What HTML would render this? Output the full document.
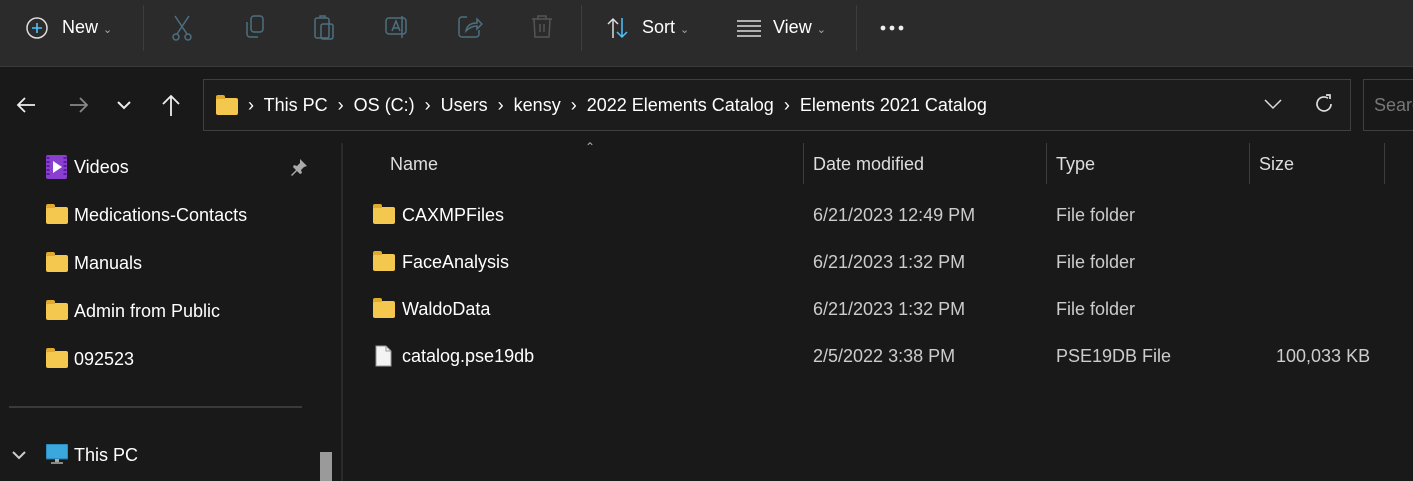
<!DOCTYPE html>
<html><head><meta charset="utf-8"><style>
*{margin:0;padding:0;box-sizing:border-box}
body{width:1413px;height:481px;background:#191919;font-family:"Liberation Sans",sans-serif;color:#fff;font-size:18px;position:relative;overflow:hidden}
.tb{position:absolute;left:0;top:0;width:1413px;height:67px;background:#2b2b2b;border-bottom:1px solid #3a3a3a}
.a{position:absolute;white-space:nowrap}
.vs{position:absolute;width:1px;background:#3d3d3d}
.fold{position:absolute;width:22px;height:17px;background:#f4c84e;border-radius:2px}
.fold:before{content:"";position:absolute;left:0;top:-3px;width:9px;height:4px;background:#e0aa2c;border-radius:2px 2px 0 0}
.gray{color:#ccc}
</style></head><body>
<div class="tb"></div>
<svg class="a" style="left:25px;top:16px" width="24" height="24" viewBox="0 0 24 24"><circle cx="12" cy="12" r="10" fill="none" stroke="#ddd" stroke-width="1.5"/><path d="M12 7v10M7 12h10" stroke="#4cc2ff" stroke-width="1.6"/></svg>
<div class="a" style="left:62px;top:17px">New <span style="font-size:11px;color:#aaa">&#8964;</span></div>
<div class="vs" style="left:143px;top:5px;height:46px"></div>
<svg class="a" style="left:169px;top:14px" width="26" height="28" viewBox="0 0 26 28" fill="none" stroke="#4d6f80" stroke-width="1.5"><path d="M6 2l12 18M20 2L8 20"/><circle cx="7" cy="23" r="3"/><circle cx="19" cy="23" r="3"/></svg>
<svg class="a" style="left:243px;top:14px" width="24" height="26" viewBox="0 0 24 26" fill="none" stroke="#4d6f80" stroke-width="1.5"><rect x="8" y="2" width="12" height="16" rx="3"/><path d="M4 8v12a3 3 0 0 0 3 3h8"/></svg>
<svg class="a" style="left:313px;top:13px" width="24" height="28" viewBox="0 0 24 28" fill="none" stroke="#4d6f80" stroke-width="1.5"><rect x="2" y="5" width="14" height="20" rx="2"/><rect x="8" y="11" width="12" height="15" rx="2"/><path d="M7 5V3h5v2"/></svg>
<svg class="a" style="left:384px;top:14px" width="28" height="26" viewBox="0 0 28 26" fill="none" stroke="#4d6f80" stroke-width="1.5"><rect x="2" y="4" width="20" height="16" rx="3"/><path d="M8 17l4-10 4 10M9 14h6M18 2v22"/></svg>
<svg class="a" style="left:457px;top:14px" width="26" height="26" viewBox="0 0 26 26" fill="none" stroke="#4d6f80" stroke-width="1.5"><path d="M10 3H5a3 3 0 0 0-3 3v14a3 3 0 0 0 3 3h14a3 3 0 0 0 3-3v-4"/><path d="M9 17c1-6 5-8 11-8V5l5 5-5 5v-3c-5 0-8 2-11 5z"/></svg>
<svg class="a" style="left:530px;top:14px" width="24" height="26" viewBox="0 0 24 26" fill="none" stroke="#555" stroke-width="1.5"><path d="M2 5h20M8 5V2h8v3M4 5l1 18h14l1-18M10 10v8M14 10v8"/></svg>
<div class="vs" style="left:581px;top:5px;height:46px"></div>
<svg class="a" style="left:606px;top:16px" width="24" height="24" viewBox="0 0 24 24" fill="none" stroke-width="1.5"><path d="M7 22V3M2 8l5-5 5 5" stroke="#ddd"/><path d="M16 2v19M11 16l5 5 5-5" stroke="#4cc2ff"/></svg>
<div class="a" style="left:642px;top:17px">Sort <span style="font-size:11px;color:#aaa">&#8964;</span></div>
<svg class="a" style="left:736px;top:19px" width="26" height="18" viewBox="0 0 26 18" stroke="#ddd" stroke-width="1.5"><path d="M1 2h24M1 7h24M1 12h24M1 17h24"/></svg>
<div class="a" style="left:773px;top:17px">View <span style="font-size:11px;color:#aaa">&#8964;</span></div>
<div class="vs" style="left:856px;top:5px;height:46px"></div>
<svg class="a" style="left:879px;top:24px" width="28" height="8" viewBox="0 0 28 8" fill="#eee"><circle cx="4" cy="4" r="2.4"/><circle cx="13" cy="4" r="2.4"/><circle cx="22" cy="4" r="2.4"/></svg>

<svg class="a" style="left:15px;top:95px" width="22" height="20" viewBox="0 0 22 20" fill="none" stroke="#eee" stroke-width="1.8"><path d="M20 10H3M10 3l-7 7 7 7"/></svg>
<svg class="a" style="left:68px;top:95px" width="22" height="20" viewBox="0 0 22 20" fill="none" stroke="#888" stroke-width="1.8"><path d="M2 10h17M12 3l7 7-7 7"/></svg>
<svg class="a" style="left:116px;top:99px" width="16" height="12" viewBox="0 0 16 12" fill="none" stroke="#eee" stroke-width="2"><path d="M2 3l6 6 6-6"/></svg>
<svg class="a" style="left:160px;top:93px" width="22" height="24" viewBox="0 0 22 24" fill="none" stroke="#eee" stroke-width="1.8"><path d="M11 23V3M3 11l8-8 8 8"/></svg>

<div class="a" style="left:203px;top:79px;width:1148px;height:52px;border:1px solid #3f3f3f;background:#1c1c1c"></div>
<div class="fold" style="left:216px;top:98px"></div>
<div class="a" style="left:248px;top:95px">&rsaquo;&nbsp; This PC &nbsp;&rsaquo;&nbsp; OS (C:) &nbsp;&rsaquo;&nbsp; Users &nbsp;&rsaquo;&nbsp; kensy &nbsp;&rsaquo;&nbsp; 2022 Elements Catalog &nbsp;&rsaquo;&nbsp; Elements 2021 Catalog</div>
<svg class="a" style="left:1264px;top:98px" width="18" height="12" viewBox="0 0 18 12" fill="none" stroke="#ddd" stroke-width="1.5"><path d="M1 2l8 8 8-8"/></svg>
<svg class="a" style="left:1312px;top:92px" width="24" height="24" viewBox="0 0 24 24" fill="none" stroke="#ddd" stroke-width="1.7"><path d="M19 12a7 7 0 1 1-3-5.8"/><path d="M14 3h4v4"/></svg>
<div class="a" style="left:1363px;top:79px;width:60px;height:52px;border:1px solid #3f3f3f"></div>
<div class="a" style="left:1374px;top:95px;color:#777">Search</div>

<svg class="a" style="left:46px;top:155px" width="22" height="24" viewBox="0 0 22 24"><rect x="0" y="0" width="21" height="24" rx="2" fill="#8a3fd0"/><path d="M2 2v20M19 2v20" stroke="#5a1e9a" stroke-width="3" stroke-dasharray="2 2"/><path d="M7 6l9 6-9 6z" fill="#fff"/></svg>
<div class="a" style="left:74px;top:157px">Videos</div>
<svg class="a" style="left:290px;top:158px" width="18" height="18" viewBox="0 0 18 18" fill="#aaa"><path d="M10 1l7 7-3 1-3 3 1 3-2 1-3-3-5 5-1-1 5-5-3-3 1-2 3 1 3-3z"/></svg>
<div class="fold" style="left:46px;top:207px"></div><div class="a" style="left:74px;top:205px">Medications-Contacts</div>
<div class="fold" style="left:46px;top:255px"></div><div class="a" style="left:74px;top:253px">Manuals</div>
<div class="fold" style="left:46px;top:303px"></div><div class="a" style="left:74px;top:301px">Admin from Public</div>
<div class="fold" style="left:46px;top:351px"></div><div class="a" style="left:74px;top:349px">092523</div>
<div class="a" style="left:9px;top:406px;width:293px;height:2px;background:#3a3a3a"></div>
<svg class="a" style="left:12px;top:450px" width="14" height="10" viewBox="0 0 14 10" fill="none" stroke="#ccc" stroke-width="2"><path d="M1 2l6 6 6-6"/></svg>
<svg class="a" style="left:46px;top:444px" width="22" height="22" viewBox="0 0 22 22"><rect x="0" y="0" width="22" height="15" fill="#3aa8dc"/><rect x="0" y="0" width="22" height="15" fill="none" stroke="#1e6fa0"/><rect x="9" y="15" width="4" height="3" fill="#aaa"/><rect x="5" y="18" width="12" height="2" fill="#888"/></svg>
<div class="a" style="left:74px;top:445px">This PC</div>
<div class="a" style="left:320px;top:452px;width:12px;height:29px;background:#9a9a9a"></div>
<div class="a" style="left:341px;top:143px;width:2px;height:338px;background:#2a2a2a"></div>

<div class="a" style="left:585px;top:140px;font-size:12px;color:#aaa">&#8963;</div>
<div class="a" style="left:390px;top:154px;color:#ddd">Name</div>
<div class="vs" style="left:803px;top:143px;height:41px"></div>
<div class="a" style="left:813px;top:154px;color:#ddd">Date modified</div>
<div class="vs" style="left:1046px;top:143px;height:41px"></div>
<div class="a" style="left:1056px;top:154px;color:#ddd">Type</div>
<div class="vs" style="left:1249px;top:143px;height:41px"></div>
<div class="a" style="left:1259px;top:154px;color:#ddd">Size</div>
<div class="vs" style="left:1384px;top:143px;height:41px"></div>

<div class="fold" style="left:373px;top:207px"></div><div class="a" style="left:402px;top:205px">CAXMPFiles</div>
<div class="a gray" style="left:813px;top:205px">6/21/2023 12:49 PM</div><div class="a gray" style="left:1056px;top:205px">File folder</div>
<div class="fold" style="left:373px;top:254px"></div><div class="a" style="left:402px;top:252px">FaceAnalysis</div>
<div class="a gray" style="left:813px;top:252px">6/21/2023 1:32 PM</div><div class="a gray" style="left:1056px;top:252px">File folder</div>
<div class="fold" style="left:373px;top:301px"></div><div class="a" style="left:402px;top:299px">WaldoData</div>
<div class="a gray" style="left:813px;top:299px">6/21/2023 1:32 PM</div><div class="a gray" style="left:1056px;top:299px">File folder</div>
<svg class="a" style="left:375px;top:345px" width="17" height="22" viewBox="0 0 17 22"><path d="M1 1h10l5 5v15H1z" fill="#f4f4f4" stroke="#999"/><path d="M11 1v5h5" fill="none" stroke="#999"/></svg>
<div class="a" style="left:402px;top:346px">catalog.pse19db</div>
<div class="a gray" style="left:813px;top:346px">2/5/2022 3:38 PM</div><div class="a gray" style="left:1056px;top:346px">PSE19DB File</div>
<div class="a gray" style="left:1276px;top:346px">100,033 KB</div>
</body></html>
